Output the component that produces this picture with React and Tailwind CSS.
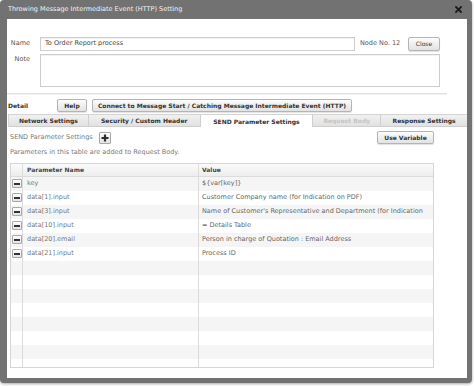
import React from 'react';

const rows = [
  { name: 'key', value: '${var[key]}' },
  { name: 'data[1].input', value: 'Customer Company name (for Indication on PDF)' },
  { name: 'data[3].input', value: "Name of Customer's Representative and Department (for Indication" },
  { name: 'data[10].input', value: '= Details Table' },
  { name: 'data[20].email', value: 'Person in charge of Quotation : Email Address' },
  { name: 'data[21].input', value: 'Process ID' },
];

// filler rows so the table keeps its stripes to the bottom
const allRows = [...rows, ...Array.from({ length: 8 }, () => null)];

function Btn({ children, className = '' }) {
  return (
    <button
      className={`flex items-center justify-center rounded-[2px] border border-[#b4b4b4] bg-gradient-to-b from-[#fdfdfd] to-[#e2e2e2] text-[6px] font-bold text-[#333] leading-none shadow-[0_1px_1px_rgba(0,0,0,0.12)] ${className}`}
    >
      {children}
    </button>
  );
}

function MinusBtn() {
  return (
    <div className="flex h-[9px] w-[10px] items-center justify-center rounded-[1px] border border-[#a8a8a8] bg-gradient-to-b from-white to-[#e4e4e4]">
      <div className="h-[2px] w-[6px] bg-[#333]" />
    </div>
  );
}

function Tab({ children, active, disabled, className = '' }) {
  return (
    <div
      className={`flex h-full items-center justify-center border-r border-[#cfcfcf] text-[6px] font-bold ${
        active ? 'bg-white text-[#333]' : 'border-b bg-gradient-to-b from-[#f1f1f1] to-[#e1e1e1]'
      } ${disabled ? 'text-[#c4c4c4]' : 'text-[#333]'} ${className}`}
    >
      {children}
    </div>
  );
}

export default function App() {
  return (
    <div className="h-[386px] w-[474px] bg-white font-['DejaVu_Sans',sans-serif]">
      <div className="flex h-[383px] w-[472px] flex-col rounded-[4px] bg-[#727272] pb-[5px] pl-[7px] pr-[5px] shadow-[0_1px_3px_rgba(0,0,0,0.35)]">
        {/* title bar */}
        <div className="flex h-[19px] shrink-0 items-center justify-between pl-[1px] pr-[5px]">
          <span className="text-[6.5px] text-[#f2f2f2]">Throwing Message Intermediate Event (HTTP) Setting</span>
          <svg width="7" height="7" viewBox="0 0 7 7">
            <path d="M1 1 L6 6 M6 1 L1 6" stroke="#1a1a1a" strokeWidth="1.8" strokeLinecap="square" />
          </svg>
        </div>

        {/* body */}
        <div className="flex flex-1 flex-col bg-white pt-[18px] text-[6.5px] text-[#555]">
          {/* name row */}
          <div className="flex h-[14px] items-center">
            <div className="w-[23px] text-right">Name</div>
            <div className="ml-[10px] flex h-[14px] w-[315px] items-center border border-[#cdcdcd] pl-[4px] text-[#444] shadow-[inset_0_1px_1px_rgba(0,0,0,0.06)]">
              To Order Report process
            </div>
            <div className="ml-[5px] w-[43px] text-[#555]">Node No. 12</div>
            <Btn className="ml-[5px] h-[14px] w-[32px] font-normal">Close</Btn>
          </div>

          {/* note row */}
          <div className="mt-[3px] flex">
            <div className="w-[23px] pt-[1px] text-right">Note</div>
            <div className="ml-[10px] h-[33px] w-[400px] border border-[#cdcdcd] shadow-[inset_0_1px_1px_rgba(0,0,0,0.06)]" />
          </div>

          <div className="mt-[6px] h-[1px] w-[440px] bg-[#dedede] shadow-[0_1px_1px_rgba(0,0,0,0.06)]" />

          {/* detail row */}
          <div className="mt-[5px] flex h-[13px] items-center">
            <div className="w-[50px] pl-[1px] text-[6px] font-bold text-[#333]">Detail</div>
            <Btn className="h-[13px] w-[30px]">Help</Btn>
            <Btn className="ml-[5px] h-[13px] w-[260px]">Connect to Message Start / Catching Message Intermediate Event (HTTP)</Btn>
          </div>

          {/* tabs */}
          <div className="ml-[1px] mt-[2px] flex h-[13px] border-t border-l border-[#d4d4d4]">
            <Tab className="w-[80px]">Network Settings</Tab>
            <Tab className="w-[112px]">Security / Custom Header</Tab>
            <Tab active className="w-[113px]">SEND Parameter Settings</Tab>
            <Tab disabled className="w-[68px]">Request Body</Tab>
            <Tab className="w-[86px] border-r-0">Response Settings</Tab>
          </div>

          {/* tab content */}
          <div className="flex flex-col pl-[3px]">
            <div className="mt-[4px] flex h-[13px] items-center">
              <span className="w-[89px] text-[#777]">SEND Parameter Settings</span>
              <div className="flex h-[12px] w-[12px] items-center justify-center rounded-[1px] border border-[#a8a8a8] bg-gradient-to-b from-white to-[#e2e2e2]">
                <svg width="8" height="8" viewBox="0 0 8 8">
                  <path d="M4 0.5 V7.5 M0.5 4 H7.5" stroke="#2e2e2e" strokeWidth="2.2" />
                </svg>
              </div>
              <Btn className="ml-[266px] h-[13px] w-[57px]">Use Variable</Btn>
            </div>

            <div className="mt-[4px] text-[#777]">Parameters in this table are added to Request Body.</div>

            {/* table */}
            <div className="mt-[5px] h-[205px] w-[424px] overflow-hidden border border-[#d6d6d6]">
              <div className="flex h-[13px] items-center border-b border-[#dcdcdc] bg-gradient-to-b from-[#fbfbfb] to-[#ededed] text-[6px] font-bold text-[#444]">
                <div className="h-full w-[12px] border-r border-[#dcdcdc]" />
                <div className="flex h-full w-[176px] items-center border-r border-[#dcdcdc] pl-[4px]">Parameter Name</div>
                <div className="flex h-full flex-1 items-center pl-[3px]">Value</div>
              </div>
              {allRows.map((r, i) => (
                <div
                  key={i}
                  className={`flex h-[14px] items-center ${i % 2 === 0 ? 'bg-[#f5f5f5]' : 'bg-white'}`}
                >
                  <div className="flex h-full w-[12px] items-center justify-center border-r border-[#dcdcdc]">
                    {r && <MinusBtn />}
                  </div>
                  <div className="flex h-full w-[176px] items-center border-r border-[#dcdcdc] pl-[4px] text-[#777]">
                    {r ? r.name : ''}
                  </div>
                  <div className="flex h-full flex-1 items-center whitespace-nowrap pl-[3px] text-[#666]">
                    {r ? r.value : ''}
                  </div>
                </div>
              ))}
            </div>
          </div>
        </div>
      </div>
    </div>
  );
}
